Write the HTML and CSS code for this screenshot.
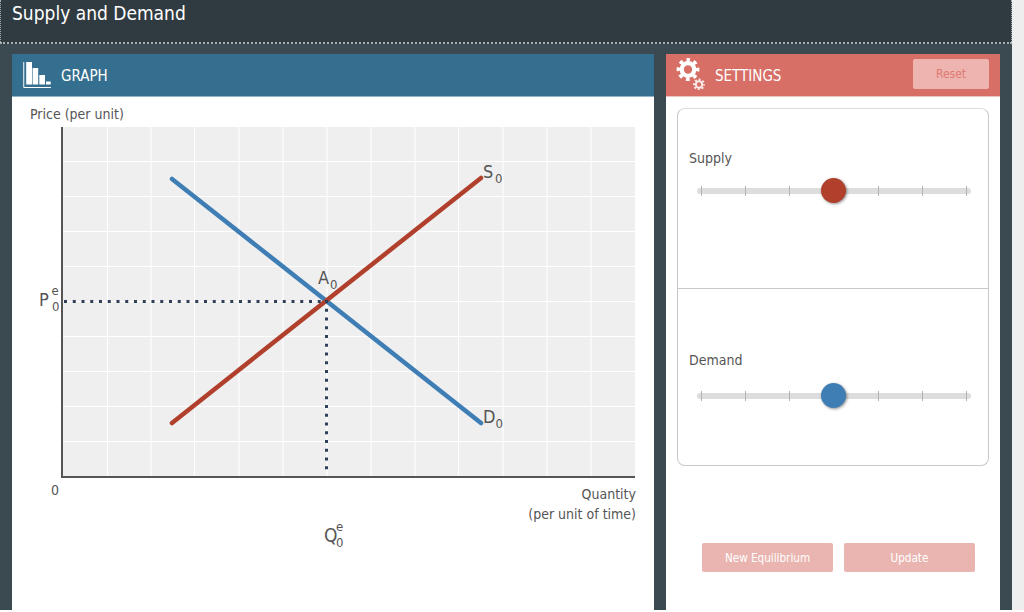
FILE: index.html
```html
<!DOCTYPE html>
<html lang="en">
<head>
<meta charset="utf-8">
<title>Supply and Demand</title>
<link rel="stylesheet" href="styles.css">
</head>
<body>
<div class="page">
  <div class="app">
    <header class="topbar"><h1 class="title">Supply and Demand</h1></header>
    <main class="workspace">
      <section class="panel panel-graph">
        <div class="panel-head head-graph">
          <svg class="icon-bars" viewBox="0 0 28 27" width="28" height="27" aria-hidden="true">
            <path class="bars-axis" d="M.75 0V25.500H28"/>
            <rect x="3.200" y="0" width="5.800" height="22.500"/>
            <rect x="9.600" y="6" width="5.600" height="16.500"/>
            <rect x="16.300" y="13" width="5.700" height="9.500"/>
            <rect x="23" y="19.500" width="4.700" height="3"/>
          </svg>
          <span class="head-label">GRAPH</span>
        </div>
        <svg class="chart" viewBox="12 97 642 513" width="642" height="513">
          <rect class="plot" x="62" y="127" width="573" height="350"/>
          <path class="grid" d="M107.500 127V477M151 127V477M194.500 127V477M239 127V477M283 127V477M327 127V477M371 127V477M415 127V477M458.500 127V477M503 127V477M547 127V477M591 127V477"/>
          <path class="grid" d="M62 161.500H635M62 196.500H635M62 231.500H635M62 266.500H635M62 301.500H635M62 336.500H635M62 371.500H635M62 406.500H635M62 441.500H635"/>
          <path class="line-demand" d="M172 179L481 423"/>
          <path class="line-supply" d="M172 423L481 178"/>
          <path class="guide" d="M64 301.500H326"/>
          <path class="guide" d="M326.500 300V470"/>
          <path class="axis" d="M62 127V477H635"/>
          <text class="lbl" x="30" y="119">Price (per unit)</text>
          <text class="lbl" x="51" y="495">0</text>
          <text class="lbl end" x="636" y="499">Quantity</text>
          <text class="lbl end" x="636" y="519">(per unit of time)</text>
          <text class="big" x="39" y="305.500">P</text>
          <text class="sup" x="51.500" y="295">e</text>
          <text class="sub" x="52" y="311">0</text>
          <text class="big" x="318" y="284">A</text>
          <text class="sub" x="330" y="289">0</text>
          <text class="big" x="483" y="178">S</text>
          <text class="sub" x="495" y="183">0</text>
          <text class="big" x="483" y="423">D</text>
          <text class="sub" x="495.500" y="428">0</text>
          <text class="big big-q" x="324" y="542">Q</text>
          <text class="sup" x="336" y="531">e</text>
          <text class="sub" x="336" y="547">0</text>
        </svg>
      </section>
      <section class="panel panel-settings">
        <div class="panel-head head-settings">
          <svg class="icon-gears" viewBox="0 0 34 32" width="34" height="32" aria-hidden="true">
            <circle class="gear-teeth" cx="12" cy="11.500" r="9.700" transform="rotate(-90 12 11.500)"/>
            <circle class="gear-ring" cx="12" cy="11.500" r="6.300"/>
            <circle class="gear-teeth-small" cx="23" cy="26.500" r="5"/>
            <circle class="gear-ring-small" cx="23" cy="26.500" r="3.200"/>
          </svg>
          <span class="head-label">SETTINGS</span>
          <button class="btn-reset" type="button">Reset</button>
        </div>
        <div class="settings-body">
          <div class="card">
            <div class="group">
              <div class="group-label">Supply</div>
              <div class="slider">
                <div class="track">
                  <i class="tick"></i><i class="tick"></i><i class="tick"></i><i class="tick"></i><i class="tick"></i><i class="tick"></i><i class="tick"></i>
                </div>
                <div class="thumb thumb-supply"></div>
              </div>
            </div>
            <div class="group group-last">
              <div class="group-label">Demand</div>
              <div class="slider slider-demand">
                <div class="track">
                  <i class="tick"></i><i class="tick"></i><i class="tick"></i><i class="tick"></i><i class="tick"></i><i class="tick"></i><i class="tick"></i>
                </div>
                <div class="thumb thumb-demand"></div>
              </div>
            </div>
          </div>
          <div class="actions">
            <button class="btn-action" type="button">New Equilibrium</button>
            <button class="btn-action" type="button">Update</button>
          </div>
        </div>
      </section>
    </main>
  </div>
</div>
</body>
</html>
```
FILE: styles.css
```css
* { box-sizing: border-box; }
html, body { margin: 0; padding: 0; background: #fff; }
body { font-family: "DejaVu Sans", sans-serif; font-stretch: condensed; overflow: hidden; }
.page { height: 610px; background: #eeeeee; }
.app { width: 1012px; height: 610px; display: flex; flex-direction: column; background: #3a4a50; }
.topbar { height: 44px; background: #2f3b41; border: 1px dotted #a5b0b0; border-width: 0 1px 2px 1px; padding: 0 0 0 11px; }
.title { margin: 0; font-size: 19px; font-weight: 400; line-height: 27px; color: #fff; }
.workspace { flex: 1; display: flex; gap: 12px; padding: 10px 12px 0; min-height: 0; }
.panel { background: #fff; display: flex; flex-direction: column; }
.panel-graph { width: 642px; }
.panel-settings { width: 334px; }
.panel-head { height: 43px; display: flex; align-items: center; color: #fff; flex: none; }
.head-graph { background: #356f8f; border-bottom: 1px solid #8fb4c8; padding-left: 11px; }
.head-settings { background: #d76f66; border-bottom: 1px solid #f0c4bf; padding-left: 10px; padding-right: 11px; }
.head-label { font-size: 15px; line-height: 16px; padding-top: 1px; }
.icon-bars { margin-right: 10px; margin-top: 1px; flex: none; fill: #fff; }
.bars-axis { fill: none; stroke: #fff; stroke-width: 1; }
.icon-gears { flex: none; margin-right: 5px; margin-top: -2px; fill: none; }
.gear-teeth { stroke: #fff; stroke-width: 3.400; stroke-dasharray: 3.800 3.820; stroke-dashoffset: 1.900; }
.gear-ring { stroke: #fff; stroke-width: 4.200; }
.gear-teeth-small { stroke: #fff; stroke-width: 2; stroke-dasharray: 2 1.927; stroke-dashoffset: 1; opacity: .85; }
.gear-ring-small { stroke: #fff; stroke-width: 2; opacity: .85; }
.btn-reset { margin-left: auto; margin-bottom: 2px; width: 76px; height: 30px; border: 0; border-radius: 2px; background: #edb4b0; color: #e07a70; font: inherit; font-size: 12px; padding: 0; }
.chart { display: block; flex: none; }
.plot { fill: #efefef; }
.grid { fill: none; stroke: #fff; stroke-width: 1.100; }
.guide { fill: none; stroke: #2e4159; stroke-width: 3; stroke-dasharray: 3 5.750; }
.line-demand, .line-supply { fill: none; stroke-width: 4.500; stroke-linecap: round; }
.line-demand { stroke: #3f7eb5; }
.line-supply { stroke: #b0402c; }
.axis { fill: none; stroke: #555; stroke-width: 2; }
.lbl { font-size: 14px; fill: #555; }
.end { text-anchor: end; }
.big { font-size: 18px; fill: #555; }
.big-q { font-size: 19px; }
.sup, .sub { font-size: 13px; fill: #555; }
.settings-body { flex: 1; display: flex; flex-direction: column; padding: 11px 11px 0; }
.card { height: 358px; border: 1px solid #c8c8c8; border-top-color: #dcdcdc; border-radius: 8px; display: flex; flex-direction: column; }
.group { height: 180px; border-bottom: 1px solid #c8c8c8; padding: 41px 0 0 11px; }
.group-last { border-bottom: 0; height: auto; flex: 1; padding-top: 63px; }
.group-label { font-size: 14px; line-height: 17px; color: #555; }
.slider { position: relative; margin: 11px 0 0 8px; width: 274px; height: 26px; display: flex; align-items: center; }
.slider-demand { margin-top: 14px; }
.track { width: 100%; height: 6px; border-radius: 3px; background: #dddddd; display: flex; justify-content: space-between; align-items: center; padding: 0 4px; }
.tick { display: block; width: 1px; height: 10px; background: #b3b3b3; flex: none; }
.thumb { position: absolute; left: 124px; top: 0; width: 25px; height: 25px; border-radius: 50%; box-shadow: 1px 1px 3px rgba(0,0,0,.45); }
.thumb-supply { background: #b0402c; }
.thumb-demand { background: #3f7eb5; }
.actions { display: flex; gap: 11px; margin: 77px 0 0 25px; }
.btn-action { width: 131px; height: 29px; border: 0; border-radius: 2px; background: #eab5b1; color: #fff; font: inherit; font-size: 11.600px; padding: 0; }
```
